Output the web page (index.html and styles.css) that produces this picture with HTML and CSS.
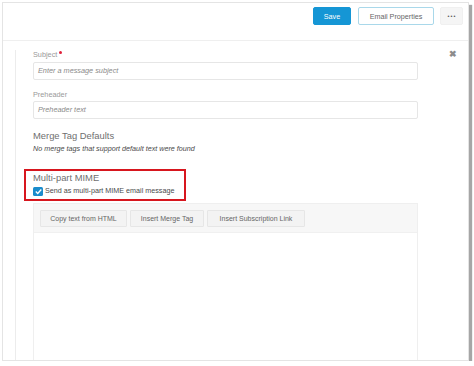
FILE: index.html
```html
<!DOCTYPE html>
<html>
<head>
<meta charset="utf-8">
<link rel="stylesheet" href="styles.css">
</head>
<body>
<div class="window">
  <header class="topbar">
    <button class="btn btn-primary">Save</button>
    <button class="btn btn-outline">Email Properties</button>
    <button class="btn btn-more">&#8226;&#8226;&#8226;</button>
  </header>
  <div class="panel">
    <span class="close">&#10006;</span>
    <div class="label">Subject<span class="req"></span></div>
    <div class="input">Enter a message subject</div>
    <div class="label label-gap">Preheader</div>
    <div class="input">Preheader text</div>
    <div class="heading heading-gap">Merge Tag Defaults</div>
    <div class="note">No merge tags that support default text were found</div>
    <div class="highlight">
      <div class="heading">Multi-part MIME</div>
      <label class="check-row">
        <span class="checkbox"><svg width="9" height="9" viewBox="0 0 9 9"><path d="M1.8 4.6 L3.7 6.4 L7.3 2.6" fill="none" stroke="#fff" stroke-width="1.4"/></svg></span>
        <span>Send as multi-part MIME email message</span>
      </label>
    </div>
    <div class="editor">
      <div class="toolbar">
        <button class="tbtn w1">Copy text from HTML</button>
        <button class="tbtn w2">Insert Merge Tag</button>
        <button class="tbtn w3">Insert Subscription Link</button>
      </div>
      <div class="editor-body"></div>
    </div>
  </div>
</div>
</body>
</html>
```

FILE: styles.css
```css
* { box-sizing: border-box; }
html, body { margin: 0; padding: 0; background: #fff; }
body { font-family: "Liberation Sans", Arial, sans-serif; }

.window {
  margin: 2px 0 0 2px;
  width: 467px;
  height: 359px;
  border: 1px solid #e4e4e4;
  box-shadow: 3px 3px 1px #a6a6a6;
  display: flex;
  flex-direction: column;
  background: #fff;
}

.topbar {
  height: 38px;
  border-bottom: 1px solid #efefef;
  display: flex;
  justify-content: flex-end;
  align-items: flex-start;
  padding: 4px 5px 0 0;
}

.btn {
  font-family: inherit;
  font-size: 7.2px;
  height: 18px;
  border-radius: 2px;
  padding: 0;
  margin: 0;
  cursor: pointer;
}
.btn-primary {
  width: 38px;
  background: #1596d5;
  color: #fff;
  border: 1px solid #1596d5;
}
.btn-outline {
  width: 76px;
  margin-left: 7px;
  background: #fff;
  color: #666;
  border: 1px solid #a9d8ea;
}
.btn-more {
  width: 23px;
  margin-left: 6px;
  background: #f5f5f5;
  color: #555;
  border: 1px solid #f0f0f0;
  font-size: 5.5px;
  letter-spacing: 1px;
  padding-left: 1px;
}

.panel {
  position: relative;
  flex: 1;
  margin: 9px 0 0 12px;
  border-left: 1px solid #ececec;
  padding-left: 17px;
  display: flex;
  flex-direction: column;
  min-height: 0;
}

.close {
  position: absolute;
  left: 433px;
  top: -1px;
  font-size: 9px;
  line-height: 10px;
  font-weight: bold;
  color: #8c8c8c;
}

.label {
  font-size: 7.3px;
  line-height: 10px;
  color: #9a9a9a;
}
.label-gap { margin-top: 10px; }
.req {
  display: inline-block;
  width: 3px;
  height: 3px;
  border-radius: 50%;
  background: #e0203a;
  margin-left: 2px;
  vertical-align: 3px;
}

.input {
  width: 385px;
  height: 18px;
  margin-top: 2px;
  border: 1px solid #e6e6e6;
  border-radius: 2px;
  padding-left: 4px;
  font-size: 7.3px;
  line-height: 16px;
  font-style: italic;
  color: #8a8a8a;
}
.label-gap + .input { margin-top: 1px; }

.heading {
  font-size: 9.4px;
  line-height: 12px;
  color: #6f6f6f;
}
.heading-gap { margin-top: 11px; }

.note {
  margin-top: 2px;
  font-size: 7.2px;
  line-height: 10px;
  font-style: italic;
  color: #4a4a4a;
}

.highlight {
  margin: 15px 0 0 -9px;
  width: 162px;
  border: 2px solid #d7161e;
  padding: 1px 0 3px 7px;
}

.check-row {
  display: flex;
  align-items: center;
  margin-top: 2px;
  font-size: 7.2px;
  line-height: 10px;
  color: #4a4a4a;
  gap: 2px;
}
.checkbox {
  width: 10px;
  height: 9px;
  background: #1a8ccc;
  border-radius: 1.5px;
  display: flex;
  align-items: center;
  justify-content: center;
}
.checkbox svg { display: block; }

.editor {
  margin-top: 2px;
  width: 385px;
  flex: 1;
  display: flex;
  flex-direction: column;
  border-left: 1px solid #efefef;
  border-right: 1px solid #efefef;
}
.toolbar {
  height: 30px;
  background: #f7f7f7;
  border-top: 1px solid #efefef;
  border-bottom: 1px solid #f0f0f0;
  display: flex;
  align-items: flex-start;
  padding: 6px 0 0 6px;
  gap: 3px;
}
.tbtn {
  font-family: inherit;
  font-size: 7px;
  height: 17px;
  padding: 0;
  margin: 0;
  background: #f3f3f3;
  color: #666;
  border: 1px solid #e6e6e6;
  border-radius: 1px;
}
.w1 { width: 87px; }
.w2 { width: 74px; }
.w3 { width: 98px; }
.editor-body { flex: 1; background: #fff; }
```
